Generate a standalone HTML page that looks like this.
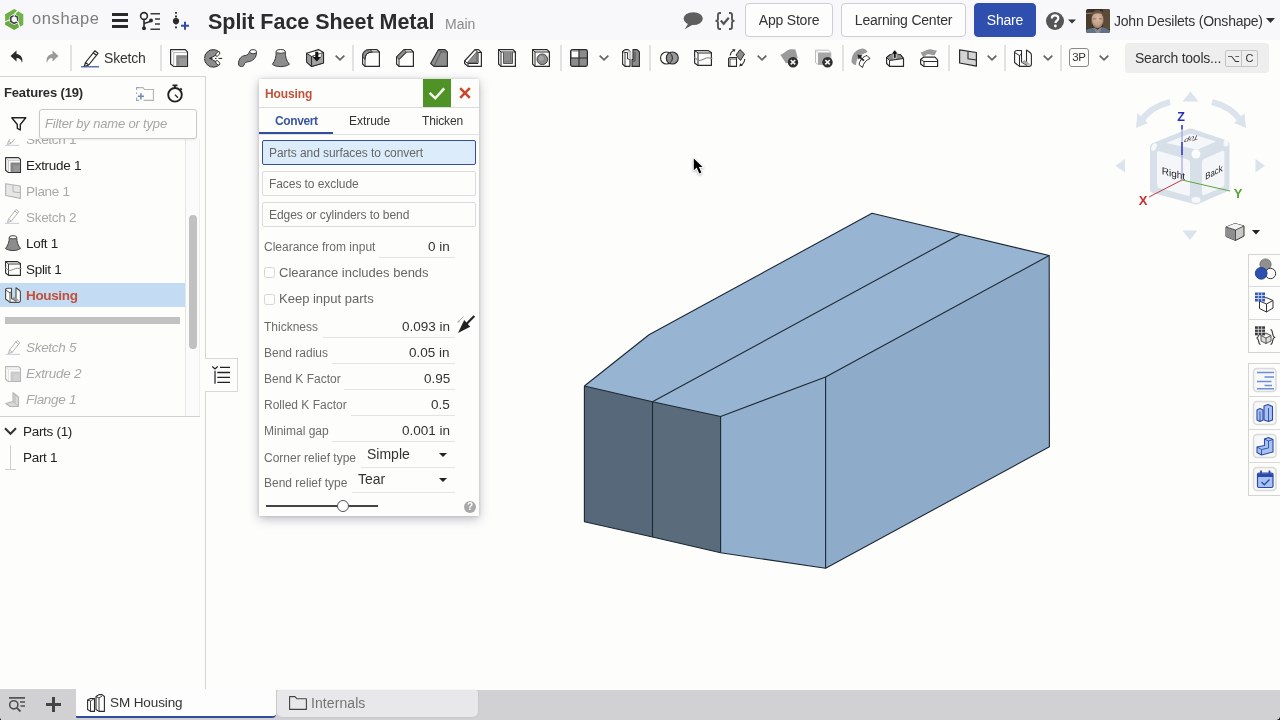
<!DOCTYPE html>
<html lang="en">
<head>
<meta charset="utf-8">
<title>Split Face Sheet Metal</title>
<style>
*{box-sizing:border-box;margin:0;padding:0}
html,body{width:1280px;height:720px;overflow:hidden;background:#fdfdfc;font-family:"Liberation Sans",sans-serif;color:#333}
.abs{position:absolute}
#hdr{position:absolute;left:0;top:0;width:1280px;height:40px;background:#f8f8fa}
#tb{position:absolute;left:0;top:40px;width:1280px;height:37px;background:#fdfdfc}
.t{position:absolute;white-space:nowrap;line-height:1}
.t,.btn,.sel,.lab,.val,.g{will-change:transform}
.sep{position:absolute;top:45px;width:2px;height:26px;background:#e2e2e2}
.btn{position:absolute;top:3px;height:34px;border:1px solid #cfcfcf;border-radius:4px;background:#fdfdfd;font-size:14px;letter-spacing:-.2px;color:#333;text-align:center;line-height:32px}
svg{position:absolute;overflow:visible}
/* left panel */
#lp{position:absolute;left:0;top:76px;width:206px;height:614px;background:#fdfdfc;border-top:1px solid #d4d4d4;border-right:1px solid #d4d4d4;border-bottom:1px solid #d4d4d4}
.row{position:absolute;left:0;width:185px;height:26px}
.row .t{left:26px;top:6.5px;font-size:13.5px;letter-spacing:-.3px;color:#222}
.row.hl .t{font-weight:bold;color:#c0513a;letter-spacing:-.35px}
.row.dim .t{color:#a9a9a9}
.row.it .t{font-style:italic;color:#a9a9a9}
/* dialog */
#dlg{position:absolute;left:259px;top:79px;width:220px;height:437px;background:#fdfdfc;box-shadow:0 3px 10px rgba(40,40,70,.30),0 0 3px rgba(0,0,0,.16)}
.sel{position:absolute;left:3px;width:214px;height:25px;border:1px solid #dcdcdc;border-radius:2px;font-size:12px;color:#666;line-height:25px;padding-left:6px;white-space:nowrap;letter-spacing:-.07px}
.lab{position:absolute;left:5px;font-size:12px;color:#6c6c6c;white-space:nowrap;line-height:1}
.val{position:absolute;right:29px;font-size:13.5px;color:#333;white-space:nowrap;line-height:1;text-align:right}
.ul{position:absolute;height:1px;background:#e3e3e3}
.cb{position:absolute;left:5px;width:11px;height:11px;border:1px solid #d6d6d6;border-radius:2.5px;background:#fefefe}
/* bottom */
#bot{position:absolute;left:0;top:690px;width:1280px;height:30px;background:#d1d1d3}
</style>
</head>
<body>
<div id="hdr">
<svg style="left:0px;top:0px" width="30" height="36" viewBox="0 0 30 36">
<polygon points="5.100,14.250 14.200,9 17,10.600 14.200,13.600 9.600,16.400 9.600,19.300 5.100,21.300" fill="#6fb044"/>
<polygon points="18,11.200 23.300,14.250 23.300,24.750 20,26.700 18.900,22.500 18.900,16.700 15.300,14.300" fill="#72b347"/>
<polygon points="5.100,22.300 9.600,20.400 9.600,22.400 14.200,25.100 17.800,23.200 19,27.200 14.200,30 5.100,24.750" fill="#68a83e"/>
<path d="M14.200 15.300L17.600 17.300V21.500L14.200 23.500L10.800 21.500V17.300Z" fill="none" stroke="#3c3c48" stroke-width="1.500"/>
<path d="M14.200 14.500V16.500M17.900 21.700L16 20.600" stroke="#f8f8fa" stroke-width="1.300"/>
</svg>
<div class="t" style="left:32px;top:9.6px;font-size:16.5px;color:#7c7c7c;letter-spacing:.6px">onshape</div>
<svg style="left:112px;top:13px" width="16" height="15" viewBox="0 0 16 15"><path d="M0 1.5H16M0 7.5H16M0 13.5H16" stroke="#2a2a2a" stroke-width="3"/></svg>
<svg style="left:139px;top:11px" width="22" height="20" viewBox="0 0 22 20">
<circle cx="5" cy="5" r="3.4" fill="none" stroke="#2a2a2a" stroke-width="1.6"/>
<path d="M5 8.4V17M5 13.5C5 11 11 12 12 9.6" fill="none" stroke="#2a2a2a" stroke-width="1.6"/>
<circle cx="5" cy="17.2" r="2" fill="#2a2a2a"/><circle cx="12" cy="9.6" r="2" fill="#2a2a2a"/>
<path d="M11.5 2.7H21M16 8H21M16 13H21M11.5 18.3H21" stroke="#3a3a3a" stroke-width="1.6"/>
</svg>
<svg style="left:172px;top:11px" width="18" height="20" viewBox="0 0 18 20">
<path d="M4 1V19" stroke="#222" stroke-width="1.8" stroke-dasharray="1.8 1.8"/>
<circle cx="4" cy="10" r="3.1" fill="#2a2a2a"/>
<path d="M9 14.8H17M13 10.8V18.8" stroke="#2d4ea3" stroke-width="2"/>
</svg>
<div class="t" id="title" style="left:208px;top:11.5px;font-size:21.5px;font-weight:bold;color:#2c2c2c;letter-spacing:-.03px">Split Face Sheet Metal</div>
<div class="t" id="main" style="left:445px;top:17px;font-size:14px;color:#8a8a8a">Main</div>
<svg style="left:683px;top:12px" width="20" height="18" viewBox="0 0 20 18"><ellipse cx="10.200" cy="6.600" rx="9.600" ry="6.400" fill="#5e5e5e"/><path d="M5.500 11L1.700 17.200L10 12.500Z" fill="#5e5e5e"/></svg>
<svg style="left:714px;top:11px" width="22" height="20" viewBox="0 0 22 20">
<path d="M7 2H5.800C4.500 2 4 2.700 4 4V8C4 9.200 3.300 9.800 1.500 9.900C3.300 10 4 10.600 4 11.800V16C4 17.300 4.500 18 5.800 18H7M15 2H16.200C17.500 2 18 2.700 18 4V8C18 9.200 18.700 9.800 20.500 9.900C18.700 10 18 10.600 18 11.800V16C18 17.300 17.500 18 16.200 18H15" fill="none" stroke="#555" stroke-width="1.900"/>
<path d="M6.800 9.500L9.700 12.800L14.800 6.800" fill="none" stroke="#555" stroke-width="2.200"/></svg>
<div class="btn" style="left:745px;width:88px">App Store</div>
<div class="btn" style="left:841px;width:125px">Learning Center</div>
<div class="btn" style="left:974px;width:62px;background:#2f4fae;border-color:#2f4fae;color:#fff">Share</div>
<svg style="left:1045px;top:11px" width="34" height="20" viewBox="0 0 34 20">
<circle cx="10" cy="10" r="9" fill="#555"/>
<path d="M6.800 7.600C6.800 5.500 8.200 4.400 10 4.400s3.300 1.100 3.300 2.900c0 2.300-2.800 2.400-2.800 4.700" fill="none" stroke="#fff" stroke-width="2.200"/><circle cx="10.400" cy="15" r="1.400" fill="#fff"/>
<path d="M23 8.500h8l-4 4z" fill="#333"/></svg>
<svg id="avatar" style="left:1086px;top:9px" width="24" height="24" viewBox="0 0 24 24">
<defs><clipPath id="avc"><rect x="0" y="0" width="24" height="24" rx="2"/></clipPath>
<radialGradient id="avf" cx=".5" cy=".4" r=".6"><stop offset="0" stop-color="#dcbca8"/><stop offset=".7" stop-color="#c29c88"/><stop offset="1" stop-color="#8a6a58"/></radialGradient></defs>
<g clip-path="url(#avc)">
<rect width="24" height="24" fill="#3a2e25"/>
<rect x="17" y="0" width="7" height="20" fill="#5a4a38"/>
<rect x="0" y="3" width="6" height="17" fill="#4a3c2c"/>
<path d="M0 4.500L8 4" stroke="#a89878" stroke-width=".8"/>
<ellipse cx="11.500" cy="11" rx="6" ry="8.500" fill="url(#avf)"/>
<path d="M5.500 7C6 2 10 1 12 1.200C15 1.200 17.500 3.500 17.800 7C16 4.500 13.500 4 11.500 4.200C9 4.200 7 5 5.500 7Z" fill="#6a5444"/>
<path d="M7 9.800H10.500M12.800 9.800H16.300" stroke="#7a6456" stroke-width=".8"/>
<path d="M0 24V21C3 19.500 6 19 8 18.500L11.500 21L15.500 18C18 18.500 21 19.500 24 21.500V24Z" fill="#5f7288"/>
<path d="M8 18.500L11.500 21L15.500 18L14 24H10Z" fill="#8c8c90"/>
</g></svg>
<div class="t" id="uname" style="left:1114px;top:13.5px;font-size:14px;letter-spacing:-.23px;color:#333">John Desilets (Onshape)</div>
<svg style="left:1266px;top:18px" width="9" height="5" viewBox="0 0 9 5"><path d="M0 0h9l-4.500 5z" fill="#333"/></svg>
</div>
<div id="tb"></div>
<div id="tbi">
<svg style="left:10px;top:50px" width="14" height="14" viewBox="0 0 14 14"><path d="M6.500 0.500L0.500 6L6.500 11.500V8C9.500 8 11.500 9.500 12 13C13.500 8.500 11 4.300 6.500 4V0.500Z" fill="#2a2a2a"/></svg>
<svg style="left:45px;top:50px" width="14" height="14" viewBox="0 0 14 14"><g transform="translate(14,0) scale(-1,1)"><path d="M6.500 0.500L0.500 6L6.500 11.500V8C9.500 8 11.500 9.500 12 13C13.500 8.500 11 4.300 6.500 4V0.500Z" fill="#9a9a9a"/></g></svg>
<div class="sep" style="left:70px"></div>
<svg style="left:81px;top:49px" width="19" height="19" viewBox="0 0 19 19"><path d="M4.500 13.500L13.800 1.800L17 4.300L7.700 16L3.200 17.500Z M12.200 3.800L15.400 6.300 M4.500 13.500L7.700 16" fill="none" stroke="#2b2b2b" stroke-width="1.200" stroke-linejoin="round"/><path d="M0 17.800H18" stroke="#3a4fa0" stroke-width="1.200"/></svg>
<div class="t" id="sk" style="left:104px;top:51px;font-size:14px;color:#333;letter-spacing:-.2px">Sketch</div>
<div class="sep" style="left:160px"></div>
<svg style="left:170px;top:49px" width="18" height="18" viewBox="0 0 18 18"><path d="M0.600 0.600H15.300L17.500 2.800V17.500H3.800L0.600 15Z" fill="#fdfdfc" stroke="#2b2b2b" stroke-width="1.200" stroke-linejoin="round"/><path d="M3.700 17V3.500H17M1 1L3.700 3.500" fill="none" stroke="#b8b8b8" stroke-width="1"/><rect x="6.200" y="6.200" width="10.700" height="10.700" fill="#858585"/><rect x="9.300" y="9.300" width="7.600" height="7.600" fill="#979797"/></svg>
<svg style="left:204px;top:49px" width="19" height="19" viewBox="0 0 19 19"><path d="M16 3.700A8.800 8.800 0 1 0 16 15.100L11.300 12.300L5.800 9.400L11.300 6.500Z" fill="#8c8c8c" stroke="#333" stroke-width="1" stroke-linejoin="round"/><ellipse cx="13.700" cy="5" rx="2.700" ry="1.500" transform="rotate(-50 13.700 5)" fill="#fdfdfc" stroke="#333" stroke-width=".9"/><ellipse cx="13.700" cy="13.800" rx="2.700" ry="1.500" transform="rotate(50 13.700 13.800)" fill="#fdfdfc" stroke="#333" stroke-width=".9"/><path d="M5.500 9.400H8.500M11 9.400H12.500M14.500 9.400H18.200" stroke="#222" stroke-width="1"/><path d="M0 9.400H2.500" stroke="#888" stroke-width="1"/></svg>
<svg style="left:238px;top:49px" width="19" height="19" viewBox="0 0 19 19"><path d="M0.500 15C0.500 9.500 3.500 7 7 6.500C9.500 6.200 11 5 11.700 2.300L18.500 3C18.500 9 15 12 10 12.800C7.500 13.200 6.500 14 6.300 15.500C6 18.400 0.500 18.400 0.500 15Z" fill="#8c8c8c" stroke="#3a3a3a" stroke-width="1"/><ellipse cx="15.100" cy="2.700" rx="3.400" ry="2.100" fill="#fdfdfc" stroke="#3a3a3a" stroke-width="1"/></svg>
<svg style="left:272px;top:49px" width="19" height="19" viewBox="0 0 19 19"><path d="M4.200 2.400C4.200 8 3 12 0.500 15.300C4 18.400 13.400 18.400 17.400 15.300C14.600 12 13.200 8 13.200 2.400Z" fill="#8c8c8c" stroke="#3a3a3a" stroke-width="1"/><ellipse cx="8.700" cy="2.400" rx="4.500" ry="1.900" fill="#fdfdfc" stroke="#3a3a3a" stroke-width="1"/></svg>
<svg style="left:306px;top:49px" width="18" height="18" viewBox="0 0 18 18"><path d="M0.600 4.200L12.500 0.600L17.500 3.500V14L5.600 17.500L0.600 13Z" fill="#fdfdfc" stroke="#2b2b2b" stroke-width="1.200" stroke-linejoin="round"/><path d="M0.600 4.200L5.600 7.500V17.500L0.600 13Z" fill="#999" stroke="#2b2b2b" stroke-width="1" stroke-linejoin="round"/><path d="M5.600 7.500L17.500 3.500V14L5.600 17.500Z" fill="#a2a2a2" stroke="#2b2b2b" stroke-width="1" stroke-linejoin="round"/><path d="M7.300 7C8 13.500 15.300 12 15.800 4.100Z" fill="#fdfdfc" stroke="#555" stroke-width=".7"/><path d="M9.300 2.800H12.300V8H14.800L10.800 12.500L6.800 8H9.300Z" fill="#111"/></svg>
<svg style="left:335px;top:55px" width="10" height="6" viewBox="0 0 10 6"><path d="M0.700 0.700L5 4.800L9.300 0.700" fill="none" stroke="#666" stroke-width="1.800"/></svg>
<div class="sep" style="left:352px"></div>
<svg style="left:362px;top:49px" width="18" height="18" viewBox="0 0 18 18"><path d="M0.600 8Q0.600 0.600 8 0.600H15L17.400 3V17.400H3L0.600 15Z" fill="#fdfdfc" stroke="#2b2b2b" stroke-width="1.200" stroke-linejoin="round"/><path d="M0.600 8Q0.600 0.600 8 0.600L10.500 3Q3 3 3 10.500Z" fill="#8c8c8c" stroke="#2b2b2b" stroke-width=".8"/><path d="M3 17.400V10.500Q3 3 10.500 3H17.400" fill="none" stroke="#2b2b2b" stroke-width="1"/></svg>
<svg style="left:396px;top:49px" width="18" height="18" viewBox="0 0 18 18"><path d="M0.600 8L8 0.600H15L17.400 3V17.400H3L0.600 15Z" fill="#fdfdfc" stroke="#2b2b2b" stroke-width="1.200" stroke-linejoin="round"/><path d="M0.600 8L8 0.600L10.500 3L3 10.500Z" fill="#8c8c8c" stroke="#2b2b2b" stroke-width=".8"/><path d="M3 17.400V10.500L10.500 3H17.400" fill="none" stroke="#2b2b2b" stroke-width="1"/></svg>
<svg style="left:430px;top:49px" width="18" height="18" viewBox="0 0 18 18"><path d="M0.600 14.500L8.500 0.600H15L17.400 3V17.400H4Z" fill="#8c8c8c" stroke="#2b2b2b" stroke-width="1.100" stroke-linejoin="round"/><path d="M4 17.400L11 3H17.400M8.500 0.600L11 3" fill="none" stroke="#555" stroke-width=".9"/></svg>
<svg style="left:464px;top:49px" width="18" height="18" viewBox="0 0 18 18"><path d="M0.600 12L11 0.600H14.500L17.400 3.500V17.400H4L0.600 14.500Z" fill="#fdfdfc" stroke="#2b2b2b" stroke-width="1.200" stroke-linejoin="round"/><path d="M3.500 13.500L13 2.500V13.500Z" fill="#8c8c8c" stroke="#555" stroke-width=".8"/><path d="M0.600 12L4 14.500V17.400M4 14.500H14V3.500L11 0.600M14 3.500H17.400" fill="none" stroke="#2b2b2b" stroke-width="1"/></svg>
<svg style="left:498px;top:49px" width="18" height="18" viewBox="0 0 18 18"><path d="M0.600 0.600H15L17.400 3V17.400H3L0.600 15Z" fill="#fdfdfc" stroke="#2b2b2b" stroke-width="1.200" stroke-linejoin="round"/><path d="M3 17.400V3H17.400M0.600 0.600L3 3" fill="none" stroke="#2b2b2b" stroke-width="1"/><path d="M5.500 3.300H14.500V14.500H5.500Z" fill="#8c8c8c"/><path d="M5.500 3.300V14.500H14.500V3.300" fill="none" stroke="#555" stroke-width="1"/><path d="M5.500 12.500H12.500V3.300" fill="none" stroke="#777" stroke-width=".8"/></svg>
<svg style="left:532px;top:49px" width="18" height="18" viewBox="0 0 18 18"><path d="M0.600 0.600H15L17.400 3V17.400H3L0.600 15Z" fill="#fdfdfc" stroke="#2b2b2b" stroke-width="1.200" stroke-linejoin="round"/><path d="M3 17.400V3H17.400M0.600 0.600L3 3" fill="none" stroke="#2b2b2b" stroke-width="1"/><circle cx="10.300" cy="10.300" r="5.300" fill="#8c8c8c" stroke="#444" stroke-width="1"/><circle cx="9.300" cy="9.300" r="2.500" fill="#a5a5a5"/></svg>
<div class="sep" style="left:560px"></div>
<svg style="left:570px;top:49px" width="18" height="18" viewBox="0 0 18 18"><rect x="0.600" y="0.600" width="16.800" height="16.800" rx="1.800" fill="#8c8c8c" stroke="#2b2b2b" stroke-width="1.200"/><rect x="1.800" y="1.800" width="6.800" height="6.800" fill="#fdfdfc"/><path d="M9 0.600V17.400M0.600 9H17.400" stroke="#2b2b2b" stroke-width="1.100"/><path d="M2.500 2.500H8" stroke="#bbb" stroke-width="1"/></svg>
<svg style="left:599px;top:55px" width="10" height="6" viewBox="0 0 10 6"><path d="M0.700 0.700L5 4.800L9.300 0.700" fill="none" stroke="#666" stroke-width="1.800"/></svg>
<svg style="left:622px;top:49px" width="18" height="18" viewBox="0 0 18 18"><path d="M0.600 2.500L3 0.600H6L8 2.500V17.400H3L0.600 15Z" fill="#fdfdfc" stroke="#2b2b2b" stroke-width="1.100" stroke-linejoin="round"/><path d="M3 17.400V3.500L0.600 2.500M3 3.500H5.500V10H8" fill="none" stroke="#2b2b2b" stroke-width=".9"/><path d="M6 1L9.500 3.500V10H7" fill="#ccc" stroke="none"/><path d="M11 0.600H15L17.400 3V17.400H10V10.500H11Z" fill="#8c8c8c" stroke="#2b2b2b" stroke-width="1.100" stroke-linejoin="round"/><path d="M13 3V12H10.500" fill="none" stroke="#444" stroke-width=".9"/></svg>
<div class="sep" style="left:649px"></div>
<svg style="left:660px;top:51px" width="19" height="14" viewBox="0 0 19 14"><circle cx="6.500" cy="7" r="6" fill="#fdfdfc" stroke="#2b2b2b" stroke-width="1.100"/><circle cx="12.300" cy="7" r="6" fill="#9a9a9a" stroke="#2b2b2b" stroke-width="1.100"/><path d="M9.400 1.750A6 6 0 0 1 9.400 12.250A6 6 0 0 1 9.400 1.750Z" fill="#8c8c8c" stroke="#2b2b2b" stroke-width="1"/></svg>
<svg style="left:694px;top:50px" width="18" height="16" viewBox="0 0 18 16"><path d="M0.600 0.600H14L17.400 2.500V15.400H4L0.600 13Z" fill="#fdfdfc" stroke="#2b2b2b" stroke-width="1.200" stroke-linejoin="round"/><path d="M4 15.400V3L0.600 0.600M4 3H17.400" fill="none" stroke="#2b2b2b" stroke-width="1"/><path d="M0 7.500C2 7.500 3 10.500 5 10.500C8 10.500 11 7.800 14 7.800C16 7.800 17 8.500 18.500 8.300" fill="none" stroke="#888" stroke-width="1.100"/></svg>
<svg style="left:728px;top:49px" width="18" height="18" viewBox="0 0 18 18"><path d="M0.600 9.500L2 8.500H8.500V17.400H0.600Z" fill="#fdfdfc" stroke="#2b2b2b" stroke-width="1.100" stroke-linejoin="round"/><path d="M2 17V10H8.500" fill="none" stroke="#2b2b2b" stroke-width=".8"/><path d="M12 0.600L16.500 5L12.500 11.500L8 6Z" fill="#8c8c8c" stroke="#2b2b2b" stroke-width="1" stroke-linejoin="round"/><path d="M2.200 6.500C2.500 4 4 2 6 1.200" fill="none" stroke="#2b2b2b" stroke-width="1.100"/><path d="M4 0.300L7.500 0.300L6.300 3Z" fill="#2b2b2b"/><path d="M16.800 10C16.500 13 15 15 13 16.200" fill="none" stroke="#2b2b2b" stroke-width="1.100"/><path d="M11.200 17.600L12.300 14.200L14.800 16.600Z" fill="#2b2b2b"/></svg>
<svg style="left:757px;top:55px" width="10" height="6" viewBox="0 0 10 6"><path d="M0.700 0.700L5 4.800L9.300 0.700" fill="none" stroke="#666" stroke-width="1.800"/></svg>
<svg style="left:780px;top:49px" width="19" height="19" viewBox="0 0 19 19"><path d="M0.300 5.800C3 5.500 5.500 1.800 9.500 0.500C12 -0.300 13.500 0.800 15.300 0.300L17.800 9C14 9 11 12 6 14.500Z" fill="#9a9a9a"/><circle cx="13" cy="13.2" r="5.200" fill="#2e2e2e"/><path d="M10.8 11.0L15.2 15.399999999999999M15.2 11.0L10.8 15.399999999999999" stroke="#f4f4f4" stroke-width="1.700"/></svg>
<svg style="left:815px;top:49px" width="19" height="19" viewBox="0 0 19 19"><path d="M0.500 1.200H13.500L15.800 3.300V15.500H3L0.500 13.500Z" fill="#fafafa" stroke="#bdbdbd" stroke-width="1" stroke-linejoin="round"/><path d="M3 3.500H15.800V15.500H3Z" fill="#a6a6a6"/><path d="M0.500 1.200L3 3.500" stroke="#c8c8c8" stroke-width=".9"/><circle cx="12.5" cy="13.2" r="5.200" fill="#2e2e2e"/><path d="M10.3 11.0L14.7 15.399999999999999M14.7 11.0L10.3 15.399999999999999" stroke="#f4f4f4" stroke-width="1.700"/></svg>
<div class="sep" style="left:842px"></div>
<svg style="left:851px;top:48px" width="20" height="20" viewBox="0 0 20 20"><path d="M0.500 14C0.500 6 5 1 11.500 0.500C13.500 0.500 15.500 2 16.500 4L10 7C6.500 9 5.500 13 5 17C3 17 1.500 16 0.500 14Z" fill="#9a9a9a"/><path d="M8 16.500C9 12 12 8.500 16 7.500L19 10.500C15 12 12.500 15 11.500 19.500Z" fill="#fdfdfc" stroke="#2b2b2b" stroke-width="1" stroke-linejoin="round"/><path d="M6.500 6.500L11.500 7.500L10 9L13.500 12L12.300 13.300L8.800 10.200L7.500 11.500Z" fill="#222"/></svg>
<svg style="left:886px;top:49px" width="18" height="18" viewBox="0 0 18 18"><path d="M0.600 8.500L4.500 5.500H14L17.500 9.500V17.400H3.500L0.600 14.500Z" fill="#fdfdfc" stroke="#2b2b2b" stroke-width="1.200" stroke-linejoin="round"/><path d="M0.600 8.500L4.500 5.500H14L17.500 9.500L3.500 11.500Z" fill="#8c8c8c" stroke="#2b2b2b" stroke-width="1" stroke-linejoin="round"/><path d="M3.500 11.500V17.400" stroke="#2b2b2b" stroke-width="1"/><path d="M8.750 0.800L12.300 5H10.100V9.300H7.400V5H5.200Z" fill="#111" stroke="#fdfdfc" stroke-width=".7"/></svg>
<svg style="left:920px;top:49px" width="19" height="18" viewBox="0 0 19 18"><path d="M0.500 3.300C4 3.300 6.500 0 10.500 0.300C13 0.500 14.500 1.800 17 1.500L14.500 6.300C12.500 6.500 11 5.200 8.500 5.200C6 5.200 5 7.500 3 7.800Z" fill="#9a9a9a"/><path d="M0.600 10.500L3.500 8.200H15L17.600 10.800V17.500H4L0.600 15Z" fill="#fdfdfc" stroke="#2b2b2b" stroke-width="1.200" stroke-linejoin="round"/><path d="M0.600 10.500L4 12.500V17.500M4 12.500H17.600" fill="none" stroke="#2b2b2b" stroke-width="1"/></svg>
<div class="sep" style="left:948px"></div>
<svg style="left:959px;top:49px" width="18" height="18" viewBox="0 0 18 18"><path d="M0.600 0.800L17.400 3.500V17.200L0.600 14Z" fill="#d4d4d4" stroke="#2b2b2b" stroke-width="1.200" stroke-linejoin="round"/><path d="M9 2.200V9.800L17.400 11" fill="none" stroke="#2b2b2b" stroke-width="1.100"/></svg>
<svg style="left:987px;top:55px" width="10" height="6" viewBox="0 0 10 6"><path d="M0.700 0.700L5 4.800L9.300 0.700" fill="none" stroke="#666" stroke-width="1.800"/></svg>
<div class="sep" style="left:1004px"></div>
<svg style="left:1014px;top:49px" width="18" height="18" viewBox="0 0 18 18"><path d="M0.600 3.500C0.600 2 2 1.500 3.500 1.500H7.500V13L12.500 16V1L16 3.500C17 4.200 17.400 5 17.400 6V15C17.400 16.500 16.500 17.400 15 17.400H5.500L0.600 13.500Z" fill="#fdfdfc" stroke="#2b2b2b" stroke-width="1.100" stroke-linejoin="round"/><path d="M7.500 13L12.500 16L16.500 15.500L10.500 11Z" fill="#aaa" stroke="none"/><path d="M0.600 3.500L5.500 6.500V17.400M5.500 6.500L7.500 5" fill="none" stroke="#2b2b2b" stroke-width="1"/></svg>
<svg style="left:1043px;top:55px" width="10" height="6" viewBox="0 0 10 6"><path d="M0.700 0.700L5 4.800L9.300 0.700" fill="none" stroke="#666" stroke-width="1.800"/></svg>
<div class="sep" style="left:1060px"></div>
<div class="abs g" style="left:1069px;top:48px;width:20px;height:19px;border:1px solid #8a8a8a;border-radius:3px;font-size:11.5px;line-height:17px;text-align:center;color:#333;letter-spacing:-.4px">3P</div>
<svg style="left:1099px;top:55px" width="10" height="6" viewBox="0 0 10 6"><path d="M0.700 0.700L5 4.800L9.300 0.700" fill="none" stroke="#666" stroke-width="1.800"/></svg>
<div class="abs" style="left:1125px;top:43px;width:144px;height:30px;background:#eeeeee;border-radius:4px"></div>
<div class="t" id="st" style="left:1135px;top:51px;font-size:14px;letter-spacing:-.23px;color:#333">Search tools...</div>
<div class="abs g" style="left:1225px;top:50px;width:17px;height:17px;border:1px solid #c4c4c4;border-radius:2px 0 0 2px;font-size:11px;line-height:15px;text-align:center;color:#333;font-family:'DejaVu Sans',sans-serif">&#8997;</div>
<div class="abs g" style="left:1241px;top:50px;width:17px;height:17px;border:1px solid #c4c4c4;border-radius:0 2px 2px 0;font-size:11px;line-height:15px;text-align:center;color:#333">C</div>
</div><!--tbi-->
<div id="lp">
<div class="t" id="feat" style="left:4px;top:9px;font-size:13px;font-weight:bold;color:#2c2c2c;letter-spacing:-.15px">Features (19)</div>
<svg style="left:136px;top:10px" width="18" height="14" viewBox="0 0 18 14"><path d="M3 0.600H7L8.500 2.500H17.400V13.400H7.500" fill="none" stroke="#b5b5b5" stroke-width="1.100"/><path d="M0.600 3V0.600H3M0.600 10.500V13.400H3M0.600 5.500V7" fill="none" stroke="#9aa7c4" stroke-width="1.100"/><path d="M1.800 9.300H8M4.900 6.200V12.400" stroke="#7088bb" stroke-width="1.500"/></svg>
<svg style="left:166px;top:7px" width="18" height="19" viewBox="0 0 18 19"><circle cx="9" cy="10.800" r="6.800" fill="none" stroke="#222" stroke-width="1.900"/><path d="M6.500 1.300H11.500M9 1.300V4M14.300 4.300L15.800 5.800" stroke="#222" stroke-width="1.800" fill="none"/><path d="M9 10.800L12 13.800" stroke="#222" stroke-width="1.300"/></svg>
<svg style="left:11px;top:40px" width="16" height="15" viewBox="0 0 16 15"><path d="M0.800 0.800H14.800L9.300 7.500V13L6.300 11.300V7.500Z" fill="none" stroke="#222" stroke-width="1.400" stroke-linejoin="round"/></svg>
<div class="abs" style="left:39px;top:32px;width:158px;height:30px;border:1px solid #c9c9c9;border-radius:3px;background:#fdfdfc;box-shadow:0 1px 2px rgba(0,0,0,.08);z-index:3"></div>
<div class="t" id="ph" style="left:45px;top:40px;font-size:13px;letter-spacing:-.17px;font-style:italic;color:#a6a6a6;z-index:4">Filter by name or type</div>
<div class="abs" id="flist" style="left:0;top:62px;width:200px;height:278px;overflow:hidden;border-bottom:1px solid #d2d2d2">
<div class="row dim" style="top:-13px"><svg style="left:5px;top:4px" width="14" height="16" viewBox="0 0 14 16"><path d="M3.500 11L11 1.500L13.800 3.700L6.300 13.200L2.500 14.500Z M9.800 3L12.600 5.200 M3.500 11L6.300 13.200" fill="none" stroke="#b5b5b5" stroke-width="1" stroke-linejoin="round"/><path d="M0 15.300H14" stroke="#c9c9d8" stroke-width="1"/></svg><div class="t">Sketch 1</div></div>
<div class="row " style="top:13px"><svg style="left:5px;top:5px" width="16" height="16" viewBox="0 0 16 16"><path d="M0.600 0.600H13.500L15.500 2.500V15.500H3.400L0.600 13.300Z" fill="#fdfdfc" stroke="#333" stroke-width="1.100" stroke-linejoin="round"/><path d="M3.300 15V3.200H15M1 1L3.300 3.200" fill="none" stroke="#b8b8b8" stroke-width=".9"/><rect x="5.500" y="5.500" width="9.400" height="9.400" fill="#858585"/><rect x="8.200" y="8.200" width="6.700" height="6.700" fill="#979797"/></svg><div class="t">Extrude 1</div></div>
<div class="row dim" style="top:39px"><svg style="left:5px;top:5px" width="16" height="16" viewBox="0 0 16 16"><path d="M0.600 0.800L15.400 3V15.400L0.600 12.500Z" fill="#e6e6e6" stroke="#b5b5b5" stroke-width="1.100" stroke-linejoin="round"/><path d="M8 2V8.800L15.400 9.800" fill="none" stroke="#b5b5b5" stroke-width="1"/></svg><div class="t">Plane 1</div></div>
<div class="row dim" style="top:65px"><svg style="left:5px;top:4px" width="14" height="16" viewBox="0 0 14 16"><path d="M3.500 11L11 1.500L13.800 3.700L6.300 13.200L2.500 14.500Z M9.800 3L12.600 5.200 M3.500 11L6.300 13.200" fill="none" stroke="#b5b5b5" stroke-width="1" stroke-linejoin="round"/><path d="M0 15.300H14" stroke="#c9c9d8" stroke-width="1"/></svg><div class="t">Sketch 2</div></div>
<div class="row " style="top:91px"><svg style="left:5px;top:5px" width="16" height="16" viewBox="0 0 16 16"><path d="M4.300 2.200C4.300 7 3 10.500 0.500 13.500C4.300 16.200 11.700 16.200 15.500 13.500C13 10.500 11.700 7 11.700 2.200Z" fill="#8c8c8c" stroke="#444" stroke-width="1"/><ellipse cx="8" cy="2.300" rx="3.700" ry="1.600" fill="#fdfdfc" stroke="#444" stroke-width="1"/></svg><div class="t">Loft 1</div></div>
<div class="row " style="top:117px"><svg style="left:5px;top:5px" width="16" height="15" viewBox="0 0 16 15"><path d="M0.600 0.600H12.500L15.400 2.500V14.400H3.500L0.600 12Z" fill="#fdfdfc" stroke="#2b2b2b" stroke-width="1.100" stroke-linejoin="round"/><path d="M3.500 14.400V3L0.600 0.600M3.500 3H15.400" fill="none" stroke="#2b2b2b" stroke-width=".9"/><path d="M0 7C2 7 2.500 9.500 4.500 9.500C7 9.500 10 7.200 12.500 7.200C14 7.200 15 7.800 16.500 7.600" fill="none" stroke="#888" stroke-width="1"/></svg><div class="t">Split 1</div></div>
<div class="abs" style="left:0;top:144px;width:185px;height:24px;background:#c3dcf3"></div>
<div class="row hl" style="top:143px"><svg style="left:5px;top:5px" width="16" height="16" viewBox="0 0 16 16"><path d="M0.600 3C0.600 1.800 1.800 1.300 3 1.300H6.500V11.500L11 14V0.800L14 3C15 3.700 15.400 4.500 15.400 5.300V13.500C15.400 14.800 14.600 15.400 13.300 15.400H5L0.600 12Z" fill="#fdfdfc" stroke="#484848" stroke-width="1.100" stroke-linejoin="round"/><path d="M6.500 11.500L11 14L14.500 13.500L9.500 9.800Z" fill="#999" stroke="none"/><path d="M0.600 3L5 5.800V15.400M5 5.800L6.500 4.500" fill="none" stroke="#484848" stroke-width=".9"/></svg><div class="t">Housing</div></div>
<div class="abs" style="left:5px;top:178px;width:175px;height:7px;background:#c2c2c2"></div>
<div class="row it" style="top:195.5px"><svg style="left:6px;top:4px" width="14" height="16" viewBox="0 0 14 16"><path d="M3.500 11L11 1.500L13.800 3.700L6.300 13.200L2.500 14.500Z M9.800 3L12.600 5.200 M3.500 11L6.300 13.200" fill="none" stroke="#b5b5b5" stroke-width="1" stroke-linejoin="round"/><path d="M0 15.300H14" stroke="#c9c9d8" stroke-width="1"/></svg><div class="t">Sketch 5</div></div>
<div class="row it" style="top:221.5px"><svg style="left:5px;top:5px" width="16" height="16" viewBox="0 0 16 16"><path d="M0.600 0.600H13.500L15.500 2.500V15.500H3.400L0.600 13.300Z" fill="#fdfdfc" stroke="#b5b5b5" stroke-width="1.100" stroke-linejoin="round"/><path d="M3.300 15V3.200H15M1 1L3.300 3.200" fill="none" stroke="#dcdcdc" stroke-width=".9"/><rect x="5.500" y="5.500" width="9.400" height="9.400" fill="#c9c9c9"/><rect x="8.200" y="8.200" width="6.700" height="6.700" fill="#d2d2d2"/></svg><div class="t">Extrude 2</div></div>
<div class="row it" style="top:247.5px"><svg style="left:5px;top:5px" width="15" height="16" viewBox="0 0 15 16"><path d="M8 0.800L13.500 5V14.500H5L0.800 11.500L8 9.500Z" fill="#d9d9d9" stroke="#b5b5b5" stroke-width="1.100" stroke-linejoin="round"/><path d="M8 9.500L13.500 14.500M8 0.800L10 2.500V11" fill="none" stroke="#b5b5b5" stroke-width=".9"/></svg><div class="t">Flange 1</div></div>
<div class="abs" style="left:185px;top:0;width:15px;height:278px;border-left:1px solid #e6e6e6;border-right:1px solid #eeeeee;background:#fbfbfb"></div>
<div class="abs" style="left:189px;top:76px;width:8px;height:134px;border-radius:4px;background:#c1c1c1"></div>
</div>
<svg style="left:4px;top:350px" width="13" height="9" viewBox="0 0 13 9"><path d="M1 1.200L6.500 6.800L12 1.200" fill="none" stroke="#333" stroke-width="2"/></svg>
<div class="t" id="parts" style="left:23px;top:347.5px;font-size:13.5px;letter-spacing:-.3px;color:#222">Parts (1)</div>
<div class="t" id="part1" style="left:23px;top:373.5px;font-size:13.5px;letter-spacing:-.3px;color:#222">Part 1</div>
<div class="abs" style="left:10px;top:368px;width:1px;height:24px;background:#cfcfcf"></div><div class="abs" style="left:5px;top:392px;width:11px;height:1px;background:#cfcfcf"></div>
</div><!--lp-->
<div id="view">
<svg style="left:0px;top:0px" width="1280" height="720" viewBox="0 0 1280 720"><polygon points="584.400,386 649,334.700 872,213.300 959.700,234.700 652.500,401.700" fill="#97b4d3"/><polygon points="652.500,401.700 959.700,234.700 1049.200,255.500 825.600,377 720.600,416.500" fill="#97b4d3"/><polygon points="825.600,377 1049.200,255.500 1049.400,446.700 825.600,568.300" fill="#8eabca"/><polygon points="720.600,416.500 825.600,377 825.600,568.300 720.600,552.800" fill="#92afce"/><polygon points="584.400,386 652.500,401.700 652.500,537 584.400,521.700" fill="#566879"/><polygon points="652.500,401.700 720.600,416.500 720.600,552.800 652.500,537" fill="#5a6b7c"/><polyline points="584.400,386 649,334.700 872,213.300 1049.200,255.500 1049.400,446.700 825.600,568.300 720.600,552.800 652.500,537 584.400,521.700 584.400,386" fill="none" stroke="#1c2833" stroke-width="1.100" stroke-linejoin="round"/><polyline points="584.400,386 652.500,401.700 720.600,416.500 825.600,377 1049.200,255.500" fill="none" stroke="#1c2833" stroke-width="1.100" stroke-linejoin="round"/><polyline points="652.500,401.700 959.700,234.700" fill="none" stroke="#1c2833" stroke-width="1.100" stroke-linejoin="round"/><polyline points="652.500,401.700 652.500,537" fill="none" stroke="#1c2833" stroke-width="1.100" stroke-linejoin="round"/><polyline points="720.600,416.500 720.600,552.800" fill="none" stroke="#1c2833" stroke-width="1.100" stroke-linejoin="round"/><polyline points="825.600,377 825.600,568.300" fill="none" stroke="#1c2833" stroke-width="1.100" stroke-linejoin="round"/></svg>
<svg style="left:0px;top:0px" width="1280" height="720" viewBox="0 0 1280 720"><path d="M693.800 158.600V170.200L696.700 167.600L699.300 173.500L701.400 172.600L698.900 166.900H702.600Z" fill="#000" stroke="#fff" stroke-width="1.800" stroke-linejoin="round" paint-order="stroke" style="filter:drop-shadow(0.500px 1px 1px rgba(0,0,0,.3))"/></svg>
<div class="abs" style="left:205px;top:358px;width:33px;height:34px;background:#fdfdfc;border:1px solid #d8d8d8;border-left:none"></div>
<svg style="left:212px;top:366px" width="19" height="18" viewBox="0 0 19 18"><path d="M0.300 0.600L3 3L5.700 0.600" fill="none" stroke="#222" stroke-width="1.300"/><path d="M3 4.800V17.800" stroke="#777" stroke-width="2"/><path d="M8 1.400H18M5.300 6.500H18M5.300 11.400H18M5.300 16.400H18" stroke="#222" stroke-width="1.300"/></svg>
<svg style="left:0px;top:0px" width="1280" height="720" viewBox="0 0 1280 720"><path d="M1190.500 91.500L1198.500 101.500H1182.500Z" fill="#dbe3ec"/><path d="M1190 240L1197.500 230.500H1182.500Z" fill="#dbe3ec"/><path d="M1115.500 165.700L1125 159V172.500Z" fill="#dbe3ec"/><path d="M1265 165.700L1255.500 159V172.500Z" fill="#dbe3ec"/><path d="M1170 102C1158 105 1147 112 1141 121" fill="none" stroke="#dbe3ec" stroke-width="6"/><path d="M1136 128L1137.500 113L1148 123Z" fill="#dbe3ec"/><path d="M1212 102C1224 105 1235 112 1241 121" fill="none" stroke="#dbe3ec" stroke-width="6"/><path d="M1246 128L1244.500 113L1234 123Z" fill="#dbe3ec"/><path d="M1153 143L1188 129Q1190.500 128 1193 129L1227 140.500Q1229.500 141.500 1229.500 144V188Q1229.500 190.500 1227 191.500L1198 204Q1196 205 1194 204L1153 193Q1150 192 1150 189.500V147Q1150 144 1153 143Z" fill="#d7dfe8"/><path d="M1166 143L1189 134Q1190.500 133.500 1192 134L1216 141.500L1199 149Q1196.500 150 1194 149Z" fill="#f4f6f9"/><path d="M1157 153Q1157 150.500 1159.500 151.300L1188 159.500Q1190 160 1190 162V194Q1190 196.500 1187.500 195.800L1159.500 188Q1157 187.300 1157 185Z" fill="#f4f6f9"/><path d="M1202 162Q1202 160 1204 159L1222 151Q1224.500 150 1224.500 152.500V184Q1224.500 186 1222.500 187L1204.500 195Q1202 196 1202 193.500Z" fill="#f4f6f9"/><circle cx="1196" cy="154" r="4.500" fill="#fbfcfd"/><ellipse cx="1154" cy="147" rx="2.500" ry="4" fill="#f6f8fa" transform="rotate(25 1154 147)"/><ellipse cx="1196" cy="200" rx="4.500" ry="3" fill="#f6f8fa"/><ellipse cx="1226" cy="143" rx="2.500" ry="3.500" fill="#f6f8fa"/><path d="M1182 180V125" stroke="#7a84dd" stroke-width=".8"/><path d="M1182 125V129.500M1182 142V155" stroke="#2a35c8" stroke-width="1.400"/><path d="M1182 180L1149 197" stroke="#c43a3a" stroke-width="1"/><path d="M1182 180L1230 191" stroke="#5aa83a" stroke-width="1"/><text x="1181" y="121" font-family="Liberation Sans,sans-serif" font-size="12.500" font-weight="bold" fill="#2530b8" text-anchor="middle">Z</text><text x="1143" y="205" font-family="Liberation Sans,sans-serif" font-size="13" font-weight="bold" fill="#c43030" text-anchor="middle">X</text><text x="1238" y="198" font-family="Liberation Sans,sans-serif" font-size="13" font-weight="bold" fill="#5aa435" text-anchor="middle">Y</text><text x="1173.500" y="177" font-family="Liberation Sans,sans-serif" font-size="10" fill="#222" text-anchor="middle" transform="translate(1173.500 173) skewY(14) translate(-1173.500 -173)">Right</text><text x="1214" y="175.500" font-family="Liberation Sans,sans-serif" font-size="9.500" fill="#222" text-anchor="middle" transform="translate(1214 172) skewY(-27) scale(.82 1) translate(-1214 -172)">Back</text><text x="1191.500" y="141" font-family="Liberation Sans,sans-serif" font-size="9.500" fill="#333" text-anchor="middle" transform="translate(1191.500 138.500) rotate(163) skewX(-40) scale(1 .62) translate(-1191.500 -138.500)">Top</text><path d="M1226 227L1235 223.500L1244 226V236L1235.500 240.500L1226 236.500Z" fill="#c9c9c9" stroke="#333" stroke-width="1" stroke-linejoin="round"/><path d="M1226 227L1235.500 230V240.500L1226 236.500Z" fill="#8e8e8e"/><path d="M1226 227L1235 223.500L1244 226L1235.500 230Z" fill="#f3f3f3"/><path d="M1226 227L1235.500 230L1244 226M1235.500 230V240.500" fill="none" stroke="#333" stroke-width=".8"/><path d="M1252 230H1260L1256 234.500Z" fill="#222"/></svg>
<div class="abs" style="left:1248px;top:254px;width:33px;height:99px;border:1px solid #d4d4d4;background:#fdfdfc"></div><div class="abs" style="left:1249px;top:286px;width:31px;height:1px;background:#d9d9d9"></div><div class="abs" style="left:1249px;top:319px;width:31px;height:1px;background:#d9d9d9"></div>
<div class="abs" style="left:1248px;top:363px;width:33px;height:133px;border:1px solid #d4d4d4;background:#fdfdfc"></div><div class="abs" style="left:1249px;top:396px;width:31px;height:1px;background:#d9d9d9"></div><div class="abs" style="left:1249px;top:429px;width:31px;height:1px;background:#d9d9d9"></div><div class="abs" style="left:1249px;top:462px;width:31px;height:1px;background:#d9d9d9"></div>
<svg style="left:0px;top:0px" width="1280" height="720" viewBox="0 0 1280 720"><circle cx="1265.500" cy="264.500" r="5.600" fill="#909090" stroke="#666" stroke-width=".8"/><circle cx="1270.500" cy="273.500" r="5.200" fill="#fdfdfd" stroke="#333" stroke-width="1"/><circle cx="1261.200" cy="273.300" r="5.900" fill="#2d4fb0" stroke="#1d3580" stroke-width=".8"/><path d="M1259.500 301L1266 297.500L1273 300.500V308L1266.500 312L1259.500 308.500Z M1259.500 301L1266.500 304L1273 300.500M1266.500 304V312" fill="#fdfdfd" stroke="#333" stroke-width="1" stroke-linejoin="round"/><rect x="1255" y="292.500" width="10" height="9" fill="#3658b8"/><path d="M1258.300 292.500V301.500M1261.700 292.500V301.500M1255 295.500H1265M1255 298.500H1265" stroke="#dfe6f6" stroke-width=".8"/><path d="M1260.500 332C1258 332 1259.500 336.500 1257 338C1259.500 339.500 1258 344.500 1260.500 344.500M1270.500 329.500C1273.500 329.500 1271.500 336 1274.500 337.200C1271.500 338.500 1273.500 344.500 1270.500 344.500" fill="none" stroke="#333" stroke-width="1.100"/><path d="M1261 335.500L1266 333L1271 335.500V341L1266 343.500L1261 341Z M1261 335.500L1266 338L1271 335.500M1266 338V343.500" fill="#ddd" stroke="#444" stroke-width=".9" stroke-linejoin="round"/><rect x="1255" y="326.300" width="10" height="9" fill="#3a3a3a"/><path d="M1258.300 326.300V335.300M1261.700 326.300V335.300M1255 329.300H1265M1255 332.300H1265" stroke="#e8e8e8" stroke-width=".8"/><rect x="1253.500" y="368.5" width="22.500" height="23" rx="3.500" fill="#f7f7f7" stroke="#dadada" stroke-width="1.500"/><rect x="1253.500" y="401.5" width="22.500" height="23" rx="3.500" fill="#f7f7f7" stroke="#dadada" stroke-width="1.500"/><rect x="1253.500" y="434.5" width="22.500" height="23" rx="3.500" fill="#f7f7f7" stroke="#dadada" stroke-width="1.500"/><rect x="1253.500" y="467.5" width="22.500" height="23" rx="3.500" fill="#f7f7f7" stroke="#dadada" stroke-width="1.500"/><path d="M1257 372.500H1274M1264.500 377H1274M1257 381.500H1271.500M1264.500 385.500H1272M1257 388.800H1274" stroke="#6b8fd8" stroke-width="1.500"/><path d="M1257 410L1260 408.500L1263 410V420L1260 421.500L1257 420Z" fill="#a8c3f3" stroke="#2c4aa6" stroke-width="1.100" stroke-linejoin="round"/><path d="M1264 406L1268 404.500L1272.500 406.500V420L1268.500 421.500L1264 420Z" fill="#a8c3f3" stroke="#2c4aa6" stroke-width="1.100" stroke-linejoin="round"/><path d="M1260 411.500V421M1268.500 408V421" stroke="#2c4aa6" stroke-width=".9"/><path d="M1264.500 439L1268.500 437.500L1273 439.500V452L1261.500 455L1257 452.500V447L1264.500 445.500Z" fill="#a8c3f3" stroke="#2c4aa6" stroke-width="1.100" stroke-linejoin="round"/><path d="M1257 447L1261.500 449.500V455M1261.500 449.500L1268.500 448V441L1264.500 439M1268.500 441L1273 439.500" fill="none" stroke="#2c4aa6" stroke-width=".9"/><rect x="1257.500" y="473" width="15.500" height="14.500" rx="1.500" fill="#a8c3f3" stroke="#2c4aa6" stroke-width="1.200"/><path d="M1257.500 473.500H1273V477H1257.500Z" fill="#2c4aa6"/><path d="M1261 470.500V475M1269.500 470.500V475" stroke="#2c4aa6" stroke-width="1.800"/><path d="M1261.500 482L1264.300 484.800L1269.500 479.500" fill="none" stroke="#2c4aa6" stroke-width="1.300"/></svg>
</div><!--view-->
<div id="dlg">
<div class="t" id="dt" style="left:6px;top:8.599999999999994px;font-size:12px;font-weight:bold;color:#c0513a;letter-spacing:-.1px">Housing</div>
<div class="abs" style="left:164px;top:0;width:28px;height:28px;background:#4f9327"></div>
<svg style="left:170px;top:8px" width="16" height="13" viewBox="0 0 16 13"><path d="M0.600 5.800L6.300 11.300L15.200 1.400" fill="none" stroke="#f4fbef" stroke-width="2.500"/></svg>
<svg style="left:200px;top:8px" width="12" height="12" viewBox="0 0 12 12"><path d="M1.200 1.200L10.800 10.800M10.800 1.200L1.200 10.800" fill="none" stroke="#c8492c" stroke-width="2.600"/></svg>
<div class="abs" style="left:0;top:28px;width:220px;height:1px;background:#dcdcdc"></div>
<div class="t" id="tab1" style="left:16px;top:35.599999999999994px;font-size:12px;font-weight:bold;color:#3a589e;letter-spacing:-.4px">Convert</div>
<div class="t" id="tab2" style="left:90px;top:35.599999999999994px;font-size:12px;color:#333;letter-spacing:-.05px">Extrude</div>
<div class="t" id="tab3" style="left:163px;top:35.599999999999994px;font-size:12px;color:#333;letter-spacing:-.15px">Thicken</div>
<div class="abs" style="left:0;top:55px;width:220px;height:1px;background:#e2e2e2"></div>
<div class="abs" style="left:0;top:53px;width:74px;height:2px;background:#2f4f9e"></div>
<div class="sel" id="s1" style="top:61px;border-color:#34509c;background:#dcecfb">Parts and surfaces to convert</div>
<div class="sel" id="s2" style="top:92px">Faces to exclude</div>
<div class="sel" id="s3" style="top:123px">Edges or cylinders to bend</div>
<div class="lab" id="l1" style="top:162px">Clearance from input</div>
<div class="val" id="v1" style="top:160.5px">0 in</div>
<div class="ul" style="top:178px;left:120px;width:76px"></div>
<div class="cb" style="top:188px"></div><div class="t" id="c1" style="left:20px;top:186.5px;font-size:13px;color:#666">Clearance includes bends</div>
<div class="cb" style="top:215px"></div><div class="t" id="c2" style="left:20px;top:213.2px;font-size:13px;color:#666">Keep input parts</div>
<div class="lab" id="l2" style="top:242px">Thickness</div>
<div class="val" id="v2" style="top:240.5px">0.093 in</div>
<div class="ul" style="top:258px;left:64px;width:132px"></div>
<div class="lab" id="l3" style="top:268px">Bend radius</div>
<div class="val" id="v3" style="top:266.5px">0.05 in</div>
<div class="ul" style="top:284px;left:73px;width:123px"></div>
<div class="lab" id="l4" style="top:294px">Bend K Factor</div>
<div class="val" id="v4" style="top:292.5px">0.95</div>
<div class="ul" style="top:310px;left:85px;width:111px"></div>
<div class="lab" id="l5" style="top:320px">Rolled K Factor</div>
<div class="val" id="v5" style="top:318.5px">0.5</div>
<div class="ul" style="top:336px;left:92px;width:104px"></div>
<div class="lab" id="l6" style="top:346px">Minimal gap</div>
<div class="val" id="v6" style="top:344.5px">0.001 in</div>
<div class="ul" style="top:362px;left:73px;width:123px"></div>
<div class="lab" id="l7" style="top:372.5px">Corner relief type</div>
<div class="ul" style="top:388px;left:102px;width:94px"></div>
<div class="t" id="d1" style="left:108px;top:368px;font-size:14px;color:#333">Simple</div>
<svg style="left:180px;top:374px" width="8" height="4" viewBox="0 0 8 4"><path d="M0 0H8L4 4Z" fill="#222"/></svg>
<div class="lab" id="l8" style="top:397.5px">Bend relief type</div>
<div class="ul" style="top:413px;left:93px;width:103px"></div>
<div class="t" id="d2" style="left:99px;top:393px;font-size:14px;color:#333">Tear</div>
<svg style="left:180px;top:399px" width="8" height="4" viewBox="0 0 8 4"><path d="M0 0H8L4 4Z" fill="#222"/></svg>
<svg style="left:198px;top:236px" width="19" height="19" viewBox="0 0 19 19"><path d="M17.300 0.900L9 9.500" stroke="#222" stroke-width="2.100"/><path d="M1 18.100L7.200 5L13.200 11.800Z" fill="#222"/><path d="M6.500 1.500L0.800 7.300" stroke="#b0b0b0" stroke-width="1"/><path d="M0.300 7.800L1.200 5.200L3 7Z" fill="#b0b0b0"/></svg>
<div class="abs" style="left:7px;top:426px;width:112px;height:2px;background:#444"></div>
<div class="abs" style="left:78px;top:421px;width:12px;height:12px;border-radius:6px;border:1px solid #555;background:#fff"></div>
<div class="abs g" style="left:205px;top:422px;width:12px;height:12px;border-radius:6px;background:#a8a8a8;color:#fff;font-size:10px;font-weight:bold;line-height:12px;text-align:center">?</div>
</div><!--dlg-->
<div id="bot">
<svg style="left:8px;top:7px" width="18" height="16" viewBox="0 0 18 16"><path d="M1 0.900H17" stroke="#505050" stroke-width="1.700"/><circle cx="5.800" cy="7.800" r="4.100" fill="none" stroke="#505050" stroke-width="1.600"/><path d="M8.800 10.800L12.500 14.500" stroke="#505050" stroke-width="1.800"/><path d="M12 5H17M12.500 9H17" stroke="#505050" stroke-width="1.700"/></svg>
<svg style="left:46px;top:7px" width="15" height="15" viewBox="0 0 15 15"><path d="M0 7.500H15M7.500 0V15" stroke="#444" stroke-width="3"/></svg>
<div class="abs" style="left:76px;top:-1px;width:200px;height:29px;background:#fdfdfd;border-bottom:2px solid #2f4f9e;border-radius:0 0 4px 1px"></div>
<svg style="left:87px;top:4px" width="18" height="18" viewBox="0 0 18 18"><path d="M0.600 6L3.500 4.500H7.500V17.400H3.500L0.600 15.500Z" fill="#fdfdfd" stroke="#2b2b2b" stroke-width="1.100" stroke-linejoin="round"/><path d="M3.500 17.400V7L0.600 6M3.500 7L7.500 4.500" fill="none" stroke="#2b2b2b" stroke-width=".9"/><path d="M9 2.500L12 0.600H15L17.400 2.500V17.400H12L9 15.500Z" fill="#fdfdfd" stroke="#2b2b2b" stroke-width="1.100" stroke-linejoin="round"/><path d="M12 17.400V4L9 2.500M12 4L15 2" fill="none" stroke="#2b2b2b" stroke-width=".9"/></svg>
<div class="t" id="smh" style="left:109.500px;top:6px;font-size:13.5px;letter-spacing:-.1px;color:#333">SM Housing</div>
<div class="abs" style="left:277px;top:0px;width:201px;height:27px;background:#e8e8ea;border-radius:2px 2px 5px 5px;box-shadow:0 0 2px rgba(0,0,0,.12)"></div>
<svg style="left:289px;top:6px" width="18" height="14" viewBox="0 0 18 14"><path d="M0.600 0.600H6L8 2.800H17.400V13.400H0.600Z" fill="none" stroke="#444" stroke-width="1.100" stroke-linejoin="round"/></svg>
<div class="t" id="intl" style="left:311px;top:6px;font-size:14px;letter-spacing:.08px;color:#747474">Internals</div>
<svg style="left:0;top:27px" width="4" height="4" viewBox="0 0 4 4"><path d="M0 0.500Q0.500 3.500 3.500 4H0Z" fill="#111"/></svg>
<svg style="left:1276px;top:26px" width="4" height="4" viewBox="0 0 4 4"><path d="M4 0.500Q3.500 3.500 0.500 4H4Z" fill="#111"/></svg>
</div><!--bot-->
</body>
</html>
